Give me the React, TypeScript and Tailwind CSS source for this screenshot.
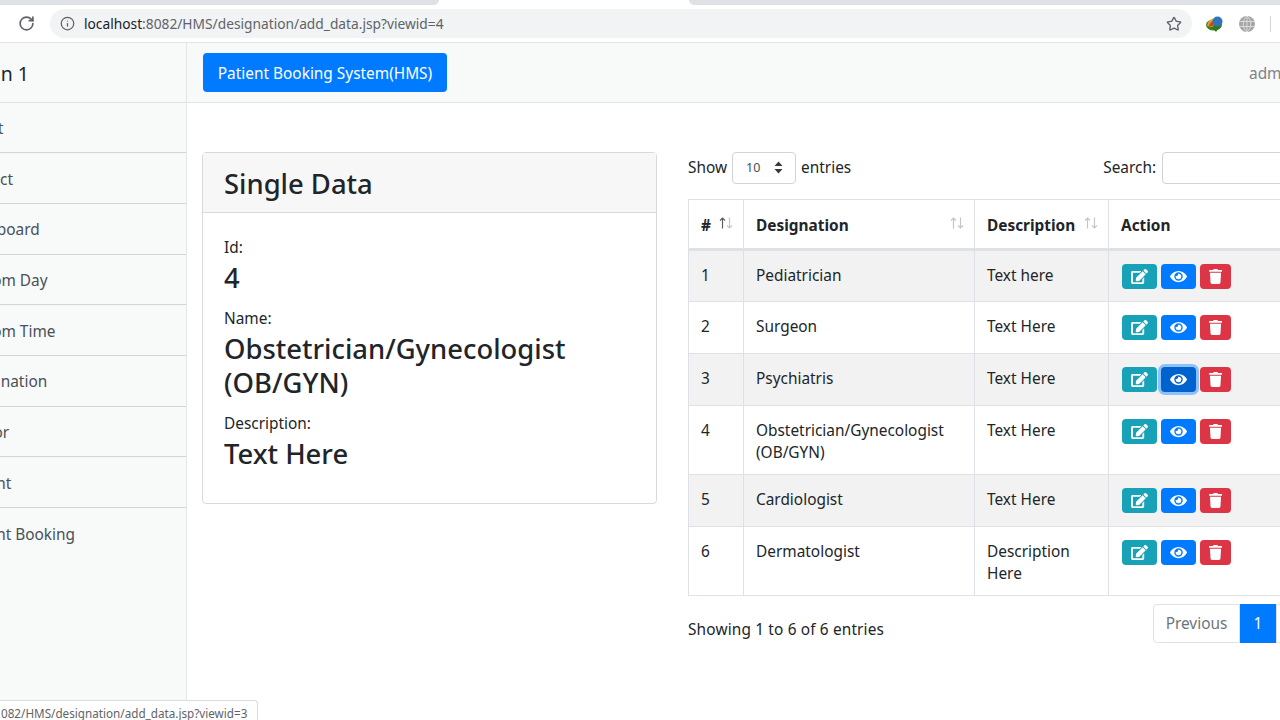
import { FaEdit, FaEye, FaTrash } from "react-icons/fa";
import { RotateCw, Info, Star } from "lucide-react";

const menu = ["Admit", "Subject", "Dashboard", "Custom Day", "Custom Time", "Designation", "Doctor", "Patient", "Patient Booking"];

const rows = [
  { id: 1, name: "Pediatrician", desc: "Text here" },
  { id: 2, name: "Surgeon", desc: "Text Here" },
  { id: 3, name: "Psychiatris", desc: "Text Here", focus: true },
  { id: 4, name: "Obstetrician/Gynecologist (OB/GYN)", desc: "Text Here" },
  { id: 5, name: "Cardiologist", desc: "Text Here" },
  { id: 6, name: "Dermatologist", desc: "Description Here" },
];

function SortArrows({ active, className }: { active?: boolean; className: string }) {
  return (
    <svg className={"absolute w-[14px] h-[12px] " + className} viewBox="0 0 14 12" fill="none" strokeWidth={1.2}>
      <path d="M3.5 11.5 V1 M1 3.5 L3.5 1 L6 3.5" stroke={active ? "#5a5f64" : "#c4c7ca"} />
      <path d="M10.5 0.5 V11 M8 8.5 L10.5 11 L13 8.5" stroke="#c4c7ca" />
    </svg>
  );
}

function ActionButtons({ focus }: { focus?: boolean }) {
  return (
    <div className="flex gap-1">
      <button className="w-[35px] h-[25px] rounded-[4px] bg-[#17a2b8] text-white flex items-center justify-center">
        <FaEdit className="w-[17px] h-[15px]" />
      </button>
      {focus ? (
        <button className="w-[35px] h-[25px] rounded-[4px] bg-[#0062cc] text-white flex items-center justify-center ring-[3px] ring-[#268fff80]">
          <FaEye className="w-[17px] h-[15px]" />
        </button>
      ) : (
        <button className="w-[35px] h-[25px] rounded-[4px] bg-[#007bff] text-white flex items-center justify-center">
          <FaEye className="w-[17px] h-[15px]" />
        </button>
      )}
      <button className="w-[31px] h-[25px] rounded-[4px] bg-[#dc3545] text-white flex items-center justify-center">
        <FaTrash className="w-[13px] h-[15px]" />
      </button>
    </div>
  );
}

export default function App() {
  return (
    <div className="relative w-[1280px] h-[720px] overflow-hidden bg-white text-[#212529] text-[15.4px] font-['Noto_Sans',sans-serif]">
      {/* browser chrome */}
      <div className="flex h-[5px] bg-white">
        <div className="w-[439px] bg-[#dee1e6] rounded-br-lg"></div>
        <div className="w-[250px]"></div>
        <div className="flex-1 bg-[#dee1e6] rounded-bl-lg"></div>
      </div>
      <div className="h-[38px] flex items-center bg-white border-b border-[#e3e4e6]">
        <RotateCw className="w-[17px] h-[17px] ml-[18px] text-[#5f6368]" strokeWidth={2.4} />
        <div className="ml-[15px] w-[1142px] h-[29px] rounded-full bg-[#f1f3f4] flex items-center">
          <Info className="ml-[10px] w-[15px] h-[15px] text-[#5f6368]" strokeWidth={2} />
          <span className="ml-[9px] pt-[1px] text-[13.75px] text-[#5f6368]">
            <span className="text-[#202124]">localhost</span>:8082/HMS/designation/add_data.jsp?viewid=4
          </span>
          <Star className="ml-auto mr-[10px] w-[16px] h-[16px] text-[#5f6368]" strokeWidth={2} />
        </div>
        <svg className="ml-[14px] w-[18px] h-[18px]" viewBox="0 0 18 18">
          <ellipse cx="8" cy="10" rx="8" ry="5.5" fill="#3f7d1f" />
          <path d="M1 11 C2 5 6 3 9 4 L7 12 Z" fill="#e0a030" />
          <path d="M3 11 C3.5 8 6 6 8 6 L7 11 Z" fill="#c8452c" />
          <circle cx="11.5" cy="6.5" r="5" fill="#2f74c0" />
          <path d="M6 12 L14 11 L10 17 Z" fill="#2c7a1a" />
        </svg>
        <svg className="ml-[15px] w-[16px] h-[16px]" viewBox="0 0 16 16" fill="none">
          <circle cx="8" cy="8" r="8" fill="#a6a6a6" />
          <path d="M0 5.5 H16 M0 10.5 H16 M8 0 V16 M8 0 C3 4 3 12 8 16 M8 0 C13 4 13 12 8 16" stroke="#e4e4e4" strokeWidth={0.8} />
        </svg>
        <div className="ml-[15px] w-px h-[16px] bg-[#d5d5d5]"></div>
      </div>

      <div className="flex -ml-[64px] w-[1420px]">
        {/* sidebar */}
        <aside className="w-[250.5px] h-[677px] shrink-0 bg-[#f8f9f9] border-r border-[#e2e6e9]">
          <div className="h-[59.6px] pl-[17px] pt-[2px] flex items-center text-[19.5px] border-b border-[#dee2e6]">Admin 1</div>
          {menu.map((m) => (
            <div key={m} className="h-[50.7px] pl-[24px] pt-[2px] flex items-center text-[#495057] border-b border-[#d3d6d8] last:border-b-0">
              {m}
            </div>
          ))}
        </aside>

        <div className="flex-1">
          {/* top nav */}
          <div className="h-[59.6px] bg-[#f8f9f9] border-b border-[#e2e6e9] flex items-center pl-[16.5px]">
            <button className="h-[39px] w-[244px] rounded-[4px] bg-[#007bff] text-white pt-[3px]">
              Patient Booking System(HMS)
            </button>
            <span className="ml-[802px] pt-[2px] text-[#7c838a]">admin</span>
          </div>

          {/* content */}
          <div className="flex items-start pt-[49.4px] pl-[15.5px]">
            <div className="w-[455px] h-[352px] rounded-[4px] border border-[#d9d9d9]">
              <div className="h-[60px] bg-[#f7f7f7] border-b border-[#d9d9d9] pl-[21px] pt-[3px] flex items-center text-[27.4px] font-medium">
                Single Data
              </div>
              <div className="pl-[21px] pr-[20px] pt-[24px]">
                <div className="leading-[22px]">Id:</div>
                <div className="text-[27.4px] font-medium leading-[34px] mt-[2px]">4</div>
                <div className="leading-[22px] mt-[13px]">Name:</div>
                <div className="text-[27.4px] font-medium leading-[34px] mt-[2px]">Obstetrician/Gynecologist (OB/GYN)</div>
                <div className="leading-[22px] mt-[13px]">Description:</div>
                <div className="text-[27.4px] font-medium leading-[34px] mt-[2px]">Text Here</div>
              </div>
            </div>

            <div className="ml-[31px] w-[655px]">
              <div className="flex items-center h-[32px]">
                <span>Show</span>
                <div className="ml-[5px] w-[64px] h-[32px] rounded-[4px] border border-[#ced4da] flex items-center pl-[13px] text-[12.5px] text-[#495057]">
                  10
                  <svg className="ml-[14px] w-[9px] h-[13px]" viewBox="0 0 9 13">
                    <path d="M4.5 0.5 L8.5 5 H0.5 Z M4.5 12.5 L8.5 8 H0.5 Z" fill="#343a40" />
                  </svg>
                </div>
                <span className="ml-[5px]">entries</span>
                <span className="ml-[252px]">Search:</span>
                <div className="ml-[6px] w-[170px] h-[32px] rounded-[4px] border border-[#ced4da]"></div>
              </div>

              <table className="mt-[15px] w-full table-fixed border-collapse">
                <thead>
                  <tr className="h-[50px] border-b-[3px] border-[#dee2e6] text-left">
                    <th className="relative w-[55px] border border-[#dee2e6] pl-[12px] pt-[4px] font-bold">
                      #<SortArrows active className="right-[10px] top-[17px]" />
                    </th>
                    <th className="relative w-[231px] border border-[#dee2e6] pl-[12px] pt-[4px] font-bold">
                      Designation
                      <SortArrows className="right-[10px] top-[17px]" />
                    </th>
                    <th className="relative w-[134px] border border-[#dee2e6] pl-[12px] pt-[4px] font-bold">
                      Description
                      <SortArrows className="right-[10px] top-[17px]" />
                    </th>
                    <th className="border border-[#dee2e6] pl-[12px] pt-[4px] font-bold">Action</th>
                  </tr>
                </thead>
                <tbody>
                  {rows.map((r) => (
                    <tr key={r.id} className="even:bg-white odd:bg-[#f2f2f2]">
                      <td className="border border-[#dee2e6] px-[12px] pt-[14px] pb-[10px] align-top leading-[22px] h-[52px]">{r.id}</td>
                      <td className="border border-[#dee2e6] px-[12px] pt-[14px] pb-[10px] align-top leading-[22px]">{r.name}</td>
                      <td className="border border-[#dee2e6] px-[12px] pt-[14px] pb-[10px] align-top leading-[22px]">{r.desc}</td>
                      <td className="border border-[#dee2e6] pl-[13px] pr-[12px] pt-[13px] pb-[10px] align-top">
                        <ActionButtons focus={r.focus} />
                      </td>
                    </tr>
                  ))}
                </tbody>
              </table>

              <div className="flex items-start justify-between mt-[8px]">
                <span className="mt-[14px] tracking-[0.15px]">Showing 1 to 6 of 6 entries</span>
                <div className="flex h-[39px] mr-[-1px]">
                  <div className="w-[87px] pt-[1px] rounded-l-[4px] border border-[#dee2e6] text-[#6c757d] flex items-center justify-center">Previous</div>
                  <div className="w-[36px] bg-[#007bff] text-white flex items-center justify-center">1</div>
                  <div className="w-[68px] rounded-r-[4px] border border-[#dee2e6] text-[#6c757d] flex items-center justify-center">Next</div>
                </div>
              </div>
            </div>
          </div>
        </div>
      </div>

      {/* link preview bubble */}
      <div className="absolute left-0 bottom-0 w-[258px] h-[20px] overflow-hidden bg-white border-t border-r border-[#dadce0] rounded-tr-[4px] pl-[1px] text-[11.7px] leading-[24px] text-[#5f6368] whitespace-nowrap">
        082/HMS/designation/add_data.jsp?viewid=3
      </div>
    </div>
  );
}
